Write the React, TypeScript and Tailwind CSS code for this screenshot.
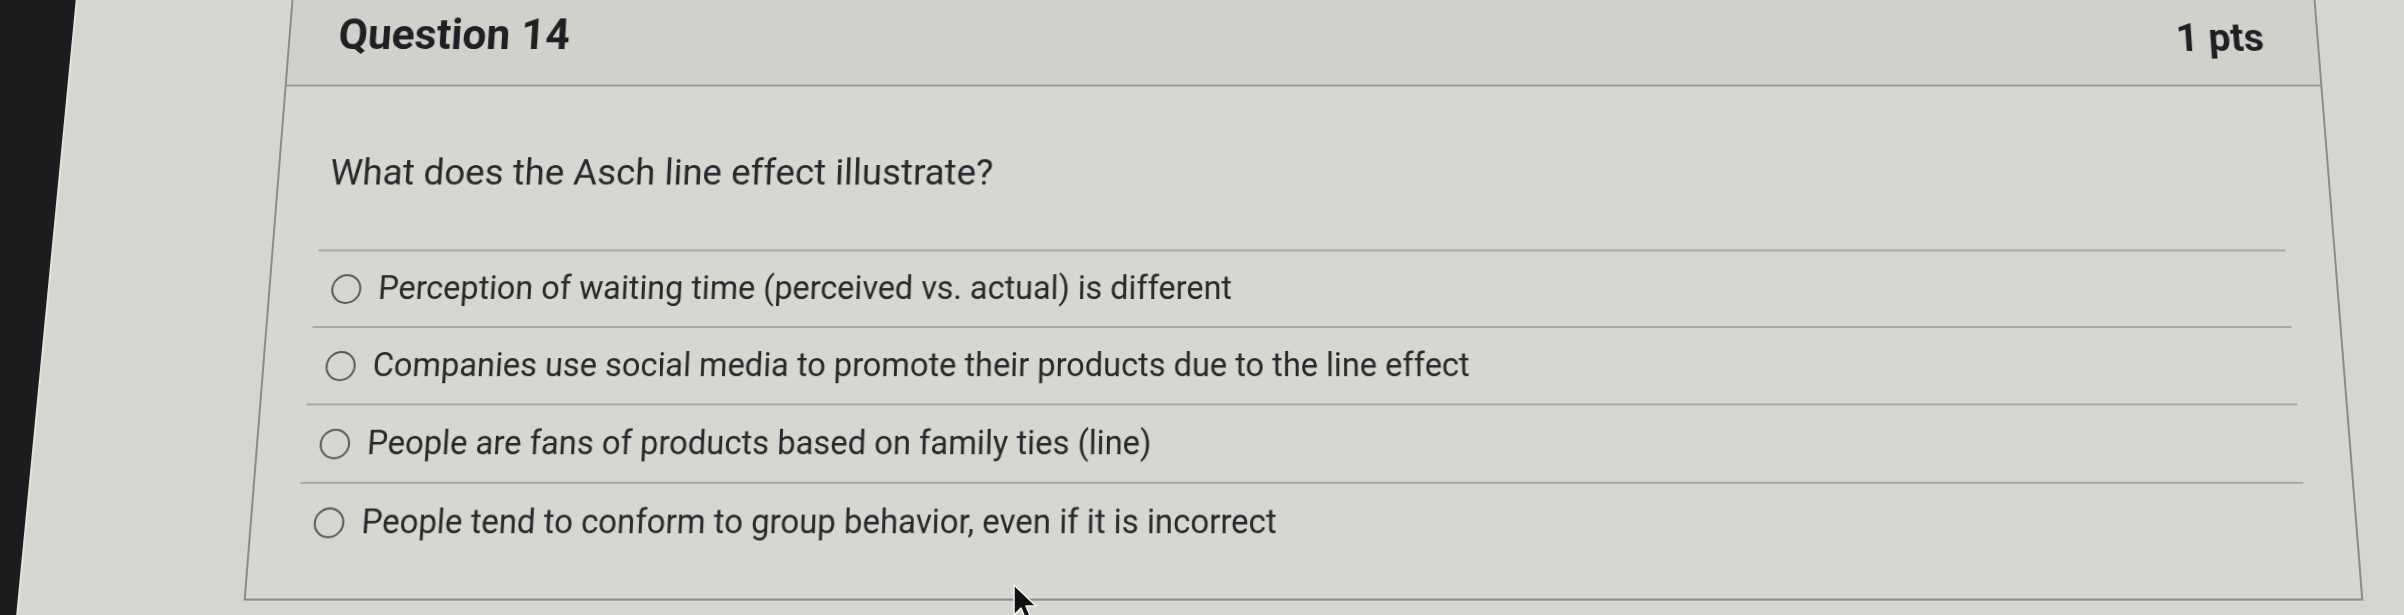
import React from "react";

const options = [
  "Perception of waiting time (perceived vs. actual) is different",
  "Companies use social media to promote their products due to the line effect",
  "People are fans of products based on family ties (line)",
  "People tend to conform to group behavior, even if it is incorrect",
];

export default function App() {
  return (
    <div className="relative w-[2404px] h-[615px] overflow-hidden bg-[#d6d4cf] [font-family:Roboto,'Liberation_Sans',sans-serif]">
      <div className="-ml-[100px] -mt-[40px] w-[2604px] h-[700px] flex origin-[1404px_347px] [transform:perspective(1000px)_rotateX(4.4deg)]">
        <div className="w-[146px] shrink-0 bg-[#1c1c1e]" />
        <div className="w-[2px] shrink-0 bg-[#e4e2dd]" />
        <div className="flex-1 bg-[#d7d5d0] pl-[219px]">
          <div className="w-[2073px] border-x-2 border-b-2 border-[#8d8b87] bg-[#d8d6d1]">
            <div className="h-[122px] pt-[17px] flex items-center justify-between pl-[49px] pr-[54px] border-b-2 border-[#9a9894] bg-[#d2d0cb]">
              <span className="text-[43.5px] font-bold text-[#1f2023] leading-none">Question 14</span>
              <span className="text-[40px] font-bold text-[#1f2023] leading-none pt-[6px]">1 pts</span>
            </div>
            <div className="pt-[67px] pb-[36px]">
              <p className="pl-[51px] text-[37px] leading-[44px] text-[#28292d]">
                What does the Asch line effect illustrate?
              </p>
              <div className="mt-[56px] ml-[45px] mr-[48px]">
                {options.map((o) => (
                  <div
                    key={o}
                    className="h-[77px] border-t-2 border-[#aba9a5] flex items-center pl-[16px]"
                  >
                    <span className="w-[30px] h-[30px] shrink-0 rounded-full border-[2.5px] border-[#58585a]" />
                    <span className="ml-[17px] text-[32.4px] leading-none text-[#28292d]">{o}</span>
                  </div>
                ))}
              </div>
            </div>
          </div>
        </div>
      </div>
      <svg
        className="absolute left-[1012px] top-[583px]"
        width="26"
        height="40"
        viewBox="0 0 26 40"
      >
        <path
          d="M2 2 L2 32 L9 25 L14 37 L19 35 L14 23 L24 23 Z"
          fill="#111"
          stroke="#f2f2f2"
          strokeWidth="1.5"
          strokeLinejoin="round"
        />
      </svg>
    </div>
  );
}
